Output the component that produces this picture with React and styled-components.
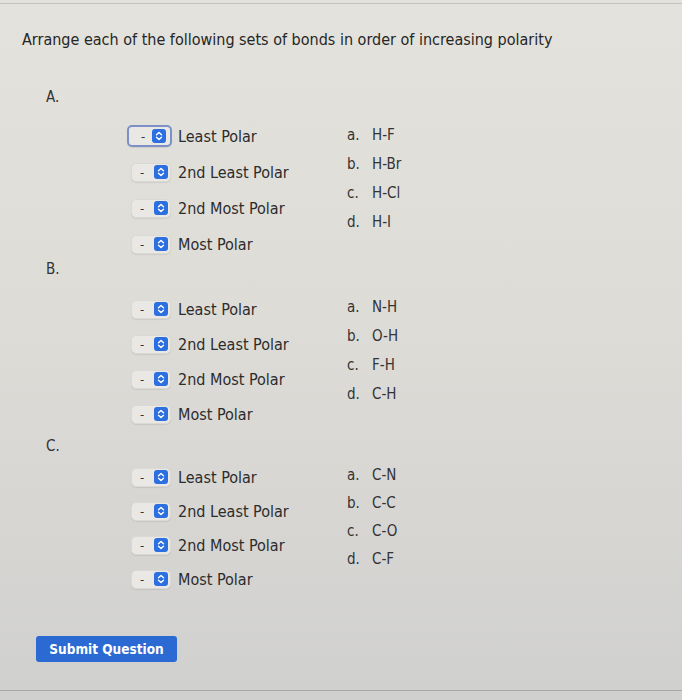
import styled, { createGlobalStyle } from 'styled-components';

const GlobalStyle = createGlobalStyle`
  html, body {
    margin: 0;
    padding: 0;
  }
  body {
    width: 682px;
    height: 700px;
    overflow: hidden;
    background: linear-gradient(180deg, #e4e2dc 0%, #dedcd7 45%, #d0d0cf 100%);
    font-family: 'DejaVu Sans Condensed', 'DejaVu Sans', sans-serif;
    color: #2b2b2b;
  }
`;

const Card = styled.div`
  margin-top: 3px;
  height: 688px;
  border-top: 1px solid #c4c3bf;
  border-bottom: 1px solid #a8a8a8;
  box-sizing: border-box;
  padding: 26px 0 0 22px;
`;

const Title = styled.h1`
  margin: 0;
  font-size: 16px;
  font-weight: 400;
  line-height: 20px;
  color: #262626;
`;

const Section = styled.section`
  margin-top: ${(p) => p.$mt}px;
`;

const SectionLabel = styled.div`
  margin-left: 24px;
  font-size: 15px;
  line-height: 20px;
  color: #333;
`;

const Body = styled.div`
  display: flex;
  margin-top: ${(p) => p.$gap}px;
`;

const SelectList = styled.ul`
  list-style: none;
  margin: 0 0 0 105px;
  padding: 0;
  width: 220px;
  display: flex;
  flex-direction: column;
  gap: ${(p) => p.$gap}px;
`;

const SelectRow = styled.li`
  display: flex;
  align-items: center;
  height: 24px;
  gap: 6px;
`;

const SelectBox = styled.div`
  box-sizing: border-box;
  display: flex;
  align-items: center;
  justify-content: space-between;
  width: ${(p) => (p.$focused ? 45 : 40)}px;
  height: ${(p) => (p.$focused ? 22 : 19)}px;
  margin-left: ${(p) => (p.$focused ? 0 : 4)}px;
  margin-right: ${(p) => (p.$focused ? 0 : 1)}px;
  padding: 0 ${(p) => (p.$focused ? 4 : 2)}px 0 ${(p) => (p.$focused ? 12 : 8)}px;
  border-radius: 5px;
  background: #e9e8e4;
  border: ${(p) => (p.$focused ? '2px solid #7d90c8' : '1px solid #dad9d4')};
  box-shadow: 0 1px 1px rgba(0, 0, 0, 0.08);
  font-size: 13px;
  color: #333;
`;

const Arrows = styled.span`
  display: flex;
  align-items: center;
  justify-content: center;
  width: 14px;
  height: 14px;
  border-radius: 3px;
  background: #2c6fe0;
`;

const RowLabel = styled.span`
  font-size: 16px;
  color: #2c2c2c;
  white-space: nowrap;
`;

const OptionList = styled.ol`
  list-style: none;
  margin: 0;
  padding: ${(p) => p.$shift}px 0 0 0;
  display: flex;
  flex-direction: column;
  gap: ${(p) => p.$gap}px;
`;

const Option = styled.li`
  display: flex;
  height: 20px;
  align-items: center;
  font-size: 15px;
  color: #333;
`;

const Letter = styled.span`
  width: 25px;
`;

const SubmitButton = styled.button`
  margin: 45px 0 0 14px;
  width: 141px;
  height: 26px;
  border: none;
  border-radius: 3px;
  background: #2b69d3;
  color: #fff;
  font-family: inherit;
  font-size: 13.5px;
  font-weight: 700;
  cursor: pointer;
`;

const ArrowIcon = () => (
  <svg width="8" height="10" viewBox="0 0 8 10" fill="none" stroke="#fff" strokeWidth="1.4" strokeLinecap="round" strokeLinejoin="round">
    <path d="M1.5 3.8 L4 1.5 L6.5 3.8" />
    <path d="M1.5 6.2 L4 8.5 L6.5 6.2" />
  </svg>
);

const ranks = ['Least Polar', '2nd Least Polar', '2nd Most Polar', 'Most Polar'];

const sections = [
  { label: 'A.', mt: 37, bodyGap: 17, rowGap: 12, optShift: 1, optGap: 9, bonds: ['H-F', 'H-Br', 'H-Cl', 'H-I'], focused: true },
  { label: 'B.', mt: 3, bodyGap: 18, rowGap: 11, optShift: 0, optGap: 9, bonds: ['N-H', 'O-H', 'F-H', 'C-H'] },
  { label: 'C.', mt: 10, bodyGap: 9, rowGap: 10, optShift: 0, optGap: 8, bonds: ['C-N', 'C-C', 'C-O', 'C-F'] },
];

const letters = ['a.', 'b.', 'c.', 'd.'];

const App = () => {
  return (
    <>
      <GlobalStyle />
      <Card>
        <Title>Arrange each of the following sets of bonds in order of increasing polarity</Title>
        {sections.map((s) => (
          <Section key={s.label} $mt={s.mt}>
            <SectionLabel>{s.label}</SectionLabel>
            <Body $gap={s.bodyGap}>
              <SelectList $gap={s.rowGap}>
                {ranks.map((rank, i) => (
                  <SelectRow key={rank}>
                    <SelectBox $focused={s.focused && i === 0}>
                      -
                      <Arrows>
                        <ArrowIcon />
                      </Arrows>
                    </SelectBox>
                    <RowLabel>{rank}</RowLabel>
                  </SelectRow>
                ))}
              </SelectList>
              <OptionList $shift={s.optShift} $gap={s.optGap}>
                {s.bonds.map((bond, i) => (
                  <Option key={bond}>
                    <Letter>{letters[i]}</Letter>
                    {bond}
                  </Option>
                ))}
              </OptionList>
            </Body>
          </Section>
        ))}
        <SubmitButton>Submit Question</SubmitButton>
      </Card>
    </>
  );
};

export default App;
